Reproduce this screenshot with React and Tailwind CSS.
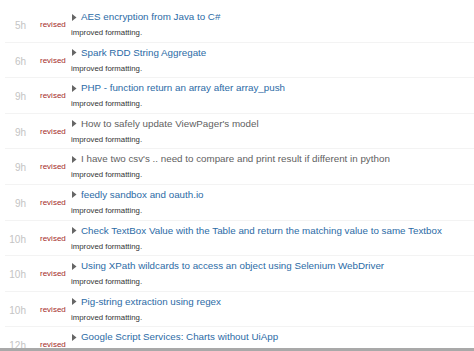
const rows = [
  { time: '5h', title: 'AES encryption from Java to C#' },
  { time: '6h', title: 'Spark RDD String Aggregate' },
  { time: '9h', title: 'PHP - function return an array after array_push' },
  { time: '9h', title: "How to safely update ViewPager's model", visited: true },
  { time: '9h', title: "I have two csv's .. need to compare and print result if different in python", visited: true },
  { time: '9h', title: 'feedly sandbox and oauth.io' },
  { time: '10h', title: 'Check TextBox Value with the Table and return the matching value to same Textbox' },
  { time: '10h', title: 'Using XPath wildcards to access an object using Selenium WebDriver' },
  { time: '10h', title: 'Pig-string extraction using regex' },
  { time: '12h', title: 'Google Script Services: Charts without UiApp' },
];

function Row({ time, title, visited }) {
  return (
    <div className="ml-[5px] h-[35.6px] flex border-b border-[#f3f3f3]">
      <div className="w-[21px] pt-[13px] text-right text-[10px] leading-[12px] text-[#c4c4c4]">{time}</div>
      <div className="w-[45px] pl-[14px] pt-[13px] text-[8px] leading-[10px] text-[#a52a2a]">revised</div>
      <div className="flex flex-col">
        <div className="flex items-center pt-[4px] h-[16px]">
          <svg width="5" height="7" viewBox="0 0 5 7" className="ml-[1px] mr-[4px]">
            <path d="M0 0L4.5 3.5L0 7z" fill="#666" />
          </svg>
          <span className={`text-[9.8px] leading-[12px] whitespace-nowrap ${visited ? 'text-[#5f5f5f]' : 'text-[#2c6ba6]'}`}>
            {title}
          </span>
        </div>
        <div className="text-[7.8px] leading-[10px] text-[#333] mt-[5px]">improved formatting.</div>
      </div>
    </div>
  );
}

export default function App() {
  return (
    <div className="w-[474px] h-[351px] bg-white overflow-hidden relative" style={{ fontFamily: '"Liberation Sans", Arial, sans-serif' }}>
      <div className="pt-[7px]">
        {rows.map((r, i) => (
          <Row key={i} {...r} />
        ))}
      </div>
      <div className="absolute left-0 right-0 bottom-0 h-[3px] bg-[#a9a9a9]" />
    </div>
  );
}
